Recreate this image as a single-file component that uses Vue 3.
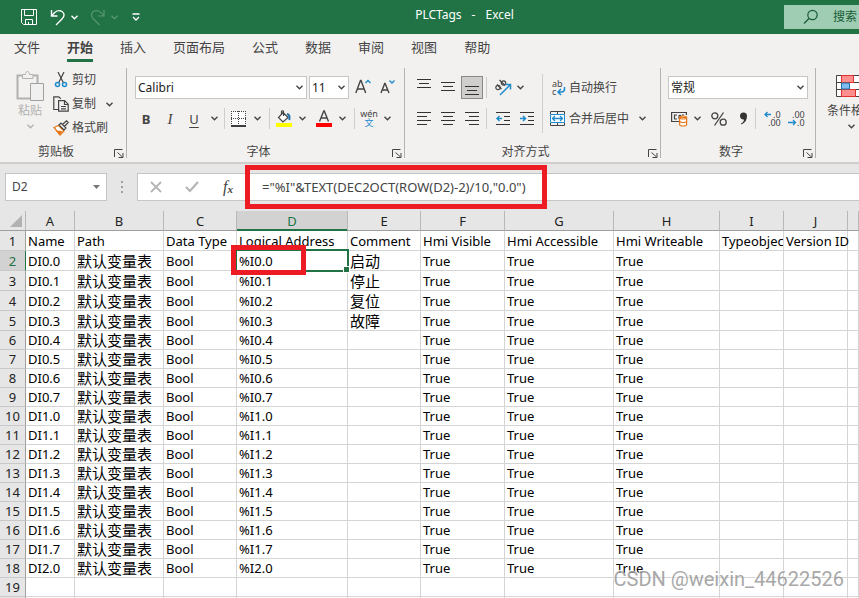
<script setup>
import { ref } from 'vue'

const tabs = ['文件', '开始', '插入', '页面布局', '公式', '数据', '审阅', '视图', '帮助']
const activeTab = ref('开始')

const columns = ['A', 'B', 'C', 'D', 'E', 'F', 'G', 'H', 'I', 'J', '']
const header = ['Name', 'Path', 'Data Type', 'Logical Address', 'Comment', 'Hmi Visible', 'Hmi Accessible', 'Hmi Writeable', 'Typeobject ID', 'Version ID', '']
const comments = ['启动', '停止', '复位', '故障']

const rows = [header]
for (let i = 0; i < 17; i++) {
  // 八进制地址
  const addr = `${Math.floor(i / 8)}.${i % 8}`
  rows.push([`DI${addr}`, '默认变量表', 'Bool', `%I${addr}`, comments[i] || '', 'True', 'True', 'True', '', '', ''])
}
rows.push(Array(11).fill(''), Array(11).fill(''))

const cellName = ref('D2')
const formula = ref('="%I"&TEXT(DEC2OCT(ROW(D2)-2)/10,"0.0")')

// 三种水平对齐图标，每条线的起点和长度
const aligns = [
  { name: '左对齐', lines: [[0, 14], [0, 10], [0, 14], [0, 10]] },
  { name: '居中', lines: [[0, 14], [2, 10], [0, 14], [2, 10]] },
  { name: '右对齐', lines: [[0, 14], [4, 10], [0, 14], [4, 10]] }
]
const valigns = [
  { name: '顶端对齐', top: 1 },
  { name: '垂直居中', top: 4 },
  { name: '底端对齐', top: 8, on: true }
]
</script>

<template>
<div class="excel">

  <header class="titlebar">
    <div class="quick">
      <button aria-label="保存">
        <svg width="17" height="17" fill="none" stroke="#fff"><path d="M.5.5h15v15h-13l-2-2zM3.500.5v6h9v-6M4.500 15.500v-5h7v5M7.500 15v-2"/></svg>
      </button>
      <button class="undo" aria-label="撤消">
        <svg width="16" height="17" fill="none" stroke="#fff" stroke-width="1.400"><path d="M1.500 1v6h6M2 6.500C5 2 9 .5 12 2.500c3 2 2.500 5 0 7.500l-6 6"/></svg>
      </button>
      <svg class="chev white" width="7" height="5"><path d="M.5.8l3 3 3-3"/></svg>
      <button class="redo" aria-label="恢复">
        <svg width="16" height="17" fill="none" stroke="#56966f" stroke-width="1.200"><path d="M14 1v6H8M13.500 6.500C10.500 2 6.500.5 3.500 2.500c-3 2-2.500 5 0 7.500l6 6"/></svg>
      </button>
      <svg class="chev dim" width="7" height="5"><path d="M.5.8l3 3 3-3"/></svg>
      <button class="more" aria-label="自定义快速访问工具栏">
        <svg width="8" height="8" fill="none" stroke="#fff" stroke-width="1.300"><path d="M.5 1h7M1 4l3 3 3-3"/></svg>
      </button>
    </div>
    <div class="title"><span>PLCTags</span><span>-</span><span>Excel</span></div>
    <label class="search">
      <svg width="16" height="16" fill="none" stroke="#185c37" stroke-width="1.200"><circle cx="9.500" cy="6" r="4.700"/><path d="M6 9.500l-5 5"/></svg>
      <input type="text" placeholder="搜索" aria-label="搜索">
    </label>
  </header>

  <nav class="tabs">
    <button v-for="tab in tabs" :key="tab" :class="{ active: tab === activeTab }" @click="activeTab = tab">{{ tab }}</button>
  </nav>

  <div class="ribbon">

    <section class="group clipboard">
      <div class="body">
        <button class="big paste">
          <svg width="29" height="32" fill="none" stroke="#b1b1b1">
            <path d="M6 4.500H1.500v23h13M17 4.500h4.500V12" fill="none" stroke-width="2"/>
            <path d="M6.500 7.500v-4h3c0-4 4-4 4 0h3.500v4z" fill="#f3f1f0"/>
            <path d="M14.500 12.500h13v17h-13z" fill="#f0f0f0" stroke="#a0a0a0"/>
          </svg>
          <span>粘贴</span>
          <svg class="chev dis" width="7" height="5"><path d="M.5.8l3 3 3-3"/></svg>
        </button>
        <div class="list">
          <button>
            <svg width="16" height="16" fill="none" stroke="#444" stroke-width="1.200"><path d="M5 0l5.500 11M11 0L5.500 11"/><g stroke="#1e8bcd" stroke-width="1.500"><circle cx="4.500" cy="12.500" r="2"/><circle cx="11.500" cy="12.500" r="2"/></g></svg>
            <span>剪切</span>
          </button>
          <button>
            <svg width="16" height="16" fill="none" stroke="#444" stroke-width="1.200"><path d="M5 13.500H.8V.8h5l2 2M5.600 4.600h6l3.600 3.600v7H5.600zM11.500 4.500v4h4M8 10.500h5M8 12.800h5"/></svg>
            <span>复制</span>
            <svg class="chev" width="7" height="5"><path d="M.5.8l3 3 3-3"/></svg>
          </button>
          <button>
            <svg width="16" height="16" fill="none"><path d="M1 7.500l4.500-2 5.500 5.500-4 4z" fill="#fff" stroke="#e8781a" stroke-width="1.300"/><path d="M3 10.500l6.500.5-2.500 4z" fill="#e8781a"/><path d="M6 5l2-2 5 5-2 2zM9.500 4.500L13.500.8 15.200 2.500 11.500 6.500" fill="#f3f1f0" stroke="#444" stroke-width="1.200"/></svg>
            <span>格式刷</span>
          </button>
        </div>
      </div>
      <footer><span>剪贴板</span><button aria-label="剪贴板设置"><svg class="launch" width="10" height="9"><path d="M.5 8V.5h8M3.500 3.500l5 4.500M9 4v4.500H4.500"/></svg></button></footer>
    </section>

    <section class="group font">
      <div class="body rows">
        <div class="row">
          <span class="combo name"><select aria-label="字体"><option>Calibri</option></select><svg class="chev" width="7" height="5"><path d="M.5.8l3 3 3-3"/></svg></span>
          <span class="combo size"><select aria-label="字号"><option>11</option></select><svg class="chev" width="7" height="5"><path d="M.5.8l3 3 3-3"/></svg></span>
          <button class="cell" aria-label="增大字号"><svg width="16" height="17" fill="none" stroke="#444" stroke-width="1.400"><path d="M.8 14L5.500 1.500h.5l4.700 12.500M2.500 10H9"/><path d="M10.500 4l2.500-2.500L15.500 4" stroke="#1e8bcd"/></svg></button>
          <button class="cell" aria-label="减小字号"><svg width="16" height="17" fill="none" stroke="#444" stroke-width="1.400"><path d="M2 14L5.700 4.500h.4L10 14M3.500 11h5"/><path d="M10.500 1.500L13 4l2.500-2.500" stroke="#1e8bcd"/></svg></button>
        </div>
        <div class="row tools">
          <button class="biu b">B</button>
          <button class="biu i">I</button>
          <button class="biu u">U</button>
          <button class="drop narrow" aria-label="下划线选项"><svg class="chev" width="7" height="5"><path d="M.5.8l3 3 3-3"/></svg></button>
          <i class="sep"></i>
          <button class="icon" aria-label="边框"><svg width="16" height="16" fill="none" stroke="#444"><path d="M.5.5h14v14H.5z" fill="#fff" stroke="none"/><path d="M0 .5h15M.5 0v14M14.500 0v14M7.500 0v14M0 7.500h15" stroke-dasharray="1 1"/><path d="M0 15h15" stroke="#000" stroke-width="1.500"/></svg></button>
          <button class="drop" aria-label="边框选项"><svg class="chev" width="7" height="5"><path d="M.5.8l3 3 3-3"/></svg></button>
          <i class="sep"></i>
          <button class="icon" aria-label="填充颜色"><svg width="16" height="17" fill="none" stroke="#444" stroke-width="1.200"><path d="M7 2.500l5 5-5 4.500-4.500-4.500zM5.500 5V1.500c0-1 2-1 2 0V6" fill="#fff"/><path d="M11 4c2.500.5 3 2.500 2.300 6" stroke="#1e6fa8" stroke-width="2"/><path d="M0 13h16v4H0z" fill="#ff0" stroke="none"/></svg></button>
          <button class="drop" aria-label="填充颜色选项"><svg class="chev" width="7" height="5"><path d="M.5.8l3 3 3-3"/></svg></button>
          <button class="icon color" aria-label="字体颜色"><svg width="16" height="17" fill="none" stroke="#444" stroke-width="1.400"><path d="M3.500 11.500L7.800 1h.5l4.200 10.500M5 8h6"/><path d="M0 13h16v4H0z" fill="red" stroke="none"/></svg></button>
          <button class="drop" aria-label="字体颜色选项"><svg class="chev" width="7" height="5"><path d="M.5.8l3 3 3-3"/></svg></button>
          <i class="sep"></i>
          <button class="icon wen"><span>wén</span><b>文</b></button>
          <button class="drop" aria-label="拼音选项"><svg class="chev" width="7" height="5"><path d="M.5.8l3 3 3-3"/></svg></button>
        </div>
      </div>
      <footer><span>字体</span><button aria-label="字体设置"><svg class="launch" width="10" height="9"><path d="M.5 8V.5h8M3.500 3.500l5 4.500M9 4v4.500H4.500"/></svg></button></footer>
    </section>

    <section class="group align">
      <div class="body">
        <div class="rows">
          <div class="row">
            <button v-for="v in valigns" :key="v.name" class="cell" :class="{ on: v.on }" :aria-label="v.name">
              <svg width="14" height="19"><rect v-for="n in 3" :key="n" :x="n === 2 ? 2 : 0" :y="v.top + (n - 1) * 4" :width="n === 2 ? 10 : 14" height="1" fill="#333"/></svg>
            </button>
            <i class="sep"></i>
            <button class="cell" aria-label="方向"><svg width="18" height="18" fill="none" stroke="#444" stroke-width="1.200"><circle cx="4" cy="8.500" r="2.200"/><path d="M3 5.500l4.500 4.500M5.500 1l5.500 5.500"/><circle cx="9.500" cy="4" r="2.200"/><path d="M6 16L16 6M11.500 5.500H16.500v5" stroke="#1e8bcd" stroke-width="1.500"/></svg></button>
            <button class="drop slim" aria-label="方向选项"><svg class="chev" width="7" height="5"><path d="M.5.8l3 3 3-3"/></svg></button>
          </div>
          <div class="row tools">
            <button v-for="a in aligns" :key="a.name" class="cell" :aria-label="a.name">
              <svg width="14" height="14"><rect v-for="(l, n) in a.lines" :key="n" :x="l[0]" :y="n * 4" :width="l[1]" height="1" fill="#333"/></svg>
            </button>
            <i class="sep"></i>
            <button class="cell" aria-label="减少缩进量"><svg width="14" height="14" fill="none" stroke="#333"><path d="M0 .5h14M8 4.500h6M8 8.500h6M0 12.500h14"/><path d="M6 6.500H1M3.500 4L1 6.500 3.500 9" stroke="#1e8bcd" stroke-width="1.500"/></svg></button>
            <button class="cell" aria-label="增加缩进量"><svg width="14" height="14" fill="none" stroke="#333"><path d="M0 .5h14M8 4.500h6M8 8.500h6M0 12.500h14"/><path d="M0 6.500h5M3 4l2.500 2.500L3 9" stroke="#1e8bcd" stroke-width="1.500"/></svg></button>
          </div>
        </div>
        <i class="sep tall"></i>
        <div class="rows text">
          <button class="row"><svg class="wrap" width="16" height="22"><text x="2" y="10">ab</text><text x="2" y="18">c</text><path d="M14.500 10v2c0 2-1 3-3 3H8.500M11 12l-3 3 3 3" fill="none" stroke="#1e8bcd" stroke-width="1.500"/></svg><span>自动换行</span></button>
          <button class="row tools"><svg width="16" height="16" fill="none" stroke="#444"><path d="M.5 3V.5h14V3M.5 12v2.500h14V12M7.500 0v3M7.500 12v3"/><path d="M.5 3.500h14v8H.5z" fill="#fff" stroke="#1e8bcd"/><path d="M3 7.500h9M5 5L2.500 7.500 5 10M10 5l2.500 2.500L10 10" stroke="#1e8bcd" stroke-width="1.300"/></svg><span>合并后居中</span><svg class="chev" width="7" height="5"><path d="M.5.8l3 3 3-3"/></svg></button>
        </div>
      </div>
      <footer><span>对齐方式</span><button aria-label="对齐设置"><svg class="launch" width="10" height="9"><path d="M.5 8V.5h8M3.500 3.500l5 4.500M9 4v4.500H4.500"/></svg></button></footer>
    </section>

    <section class="group number">
      <div class="body rows">
        <div class="row">
          <span class="combo format"><select aria-label="数字格式"><option>常规</option></select><svg class="chev" width="7" height="5"><path d="M.5.8l3 3 3-3"/></svg></span>
        </div>
        <div class="row tools">
          <button class="icon" aria-label="会计数字格式"><svg width="17" height="16" fill="none" stroke="#444" stroke-width="1.200"><path d="M8 10.500H.6v-9h14.800V4M6 4H3.500v4H6M8 8V5c0-1 2-1 2 0M13 4h-2"/><path d="M8.600 6.500h7v7c0 2-7 2-7 0z" fill="#fff" stroke="#e8781a"/><path d="M8.600 6.500c0 2 7 2 7 0s-7-2-7 0M8.600 10c0 2 7 2 7 0" stroke="#e8781a"/></svg></button>
          <button class="drop" aria-label="会计格式选项"><svg class="chev" width="7" height="5"><path d="M.5.8l3 3 3-3"/></svg></button>
          <button class="cell" aria-label="百分比"><svg width="16" height="14" fill="none" stroke="#444" stroke-width="1.300"><circle cx="3.800" cy="3.800" r="3"/><circle cx="12.200" cy="10.200" r="3"/><path d="M12.500.5l-9 13"/></svg></button>
          <button class="cell" aria-label="千位分隔"><svg width="9" height="14"><path d="M1 4a3.400 3.400 0 0 1 7 0c0 4-2 7-5.500 8.500L2 11.500C4 10.500 5 9 5 7.500 3 8 1 6.500 1 4z" fill="#333"/></svg></button>
          <i class="sep"></i>
          <button class="cell" aria-label="增加小数位数"><svg class="dec" width="18" height="22"><text x="9" y="10">.0</text><text x="4" y="18">.00</text><path d="M7 6.500H1M3.500 4L1 6.500 3.500 9"/></svg></button>
          <button class="cell" aria-label="减少小数位数"><svg class="dec" width="18" height="22"><text x="4" y="10">.00</text><text x="9" y="18">.0</text><path d="M0 14.500h7M5 12l2.500 2.500L5 17"/></svg></button>
        </div>
      </div>
      <footer><span>数字</span><button aria-label="数字设置"><svg class="launch" width="10" height="9"><path d="M.5 8V.5h8M3.500 3.500l5 4.500M9 4v4.500H4.500"/></svg></button></footer>
    </section>

    <section class="group styles">
      <div class="body">
        <button class="big">
          <svg width="30" height="32" fill="#fff" stroke="#444"><path d="M.5 4.500h29v21H.5zM.5 11.500h29M.5 18.500h29M23.500 4.500v21"/><path d="M5.500 4.500h12v7h-12zM5.500 18.500h14v7h-14z" fill="#ff8f8f" stroke="#e03030"/><path d="M5.500 12h8v6h-8z" fill="#7fbdf0" stroke="#1e6fa8"/></svg>
          <span>条件格式</span>
          <svg class="chev" width="7" height="5"><path d="M.5.8l3 3 3-3"/></svg>
        </button>
      </div>
    </section>
  </div>

  <div class="formulabar">
    <div class="namebox">
      <input v-model="cellName" type="text" aria-label="名称框">
      <svg width="7" height="4"><path d="M0 0h7L3.500 4z" fill="#777"/></svg>
    </div>
    <svg class="dots" width="2" height="12" fill="#a0a0a0"><path d="M0 0h2v2H0zM0 5h2v2H0zM0 10h2v2H0z"/></svg>
    <div class="fx">
      <button aria-label="取消"><svg width="12" height="12" fill="none" stroke="#b5b5b5" stroke-width="1.800"><path d="M1 1l10 10M11 1L1 11"/></svg></button>
      <button aria-label="输入"><svg width="14" height="12" fill="none" stroke="#b5b5b5" stroke-width="2.200"><path d="M1 6l4 4L13 1"/></svg></button>
      <button class="fn"><em>f</em><small>x</small></button>
    </div>
    <div class="formula">
      <input v-model="formula" type="text" aria-label="编辑栏">
      <div class="mark"></div>
    </div>
  </div>

  <main class="sheet">
    <table>
      <colgroup>
        <col class="c-row"><col class="c-a"><col class="c-b"><col class="c-c"><col class="c-d"><col class="c-e">
        <col class="c-f"><col class="c-g"><col class="c-h"><col class="c-i"><col class="c-i"><col>
      </colgroup>
      <thead>
        <tr>
          <th class="corner"><svg width="12" height="12"><path d="M12 0v12H0z" fill="#b2b2b2"/></svg></th>
          <th v-for="c in columns" :key="c" :class="{ sel: c === 'D' }">{{ c }}</th>
        </tr>
      </thead>
      <tbody>
        <tr v-for="(row, r) in rows" :key="r" :class="{ high: r < 5 }">
          <th :class="{ sel: r === 1 }">{{ r + 1 }}</th>
          <td v-for="(cell, c) in row" :key="c" :class="{ current: r === 1 && c === 3, cjk: r > 0 && (c === 1 || c === 4), spill: cell && !row[c + 1] }">
            {{ cell }}
            <template v-if="r === 1 && c === 3">
              <div class="cursor"></div>
              <div class="mark"></div>
            </template>
          </td>
        </tr>
      </tbody>
    </table>
  </main>

  <div class="watermark">CSDN @weixin_44622526</div>
</div>
</template>

<style>
body {
  margin: 0;
  overflow: hidden;
}
</style>

<style scoped>
.excel {
  position: relative;
  display: flex;
  flex-direction: column;
  height: 100vh;
  overflow: hidden;
  background: #fff;
  color: #444;
  font: 12px/16px "Noto Sans", "Noto Sans CJK SC", sans-serif;
}

button {
  display: flex;
  align-items: center;
  justify-content: center;
  flex: none;
  margin: 0;
  padding: 0;
  border: 0;
  background: none;
  color: inherit;
  font: inherit;
  white-space: nowrap;
}

input,
select {
  min-width: 0;
  box-sizing: border-box;
  border: 0;
  padding: 0;
  margin: 0;
  background: none;
  color: inherit;
  font: inherit;
  outline: 0;
}

svg {
  display: block;
  flex: none;
}

.chev {
  fill: none;
  stroke: #444;
  stroke-width: 1.4;
}

.chev.white {
  stroke: #fff;
}

.chev.dim {
  stroke: #56966f;
}

.chev.dis {
  stroke: #b1b1b1;
}

/* 标题栏 */
.titlebar {
  display: flex;
  flex: none;
  align-items: center;
  height: 34px;
  background: #217346;
  color: #fff;
}

.quick {
  display: flex;
  align-items: center;
  width: 124px;
  padding-left: 21px;
}

.undo,
.redo {
  margin: 0 5px 0 12px;
}

.more {
  margin-left: 14px;
}

.title {
  display: flex;
  flex: 1;
  justify-content: center;
  gap: 10px;
  padding-bottom: 4px;
}

.search {
  display: flex;
  align-items: center;
  gap: 14px;
  width: 56px;
  height: 24px;
  padding-left: 19px;
  background: #9fcdb3;
  color: #185c37;
}

.search input {
  width: 26px;
}

.search input::placeholder {
  color: #185c37;
  opacity: 1;
}

.tabs {
  display: flex;
  flex: none;
  gap: 27px;
  height: 30px;
  padding-left: 14px;
  background: #f3f1f0;
  font-size: 13px;
}

.tabs button {
  box-sizing: border-box;
  height: 28px;
  border-bottom: 3px solid transparent;
}

.tabs .active {
  border-color: #217346;
  font-weight: bold;
}

/* 功能区 */
.ribbon {
  display: flex;
  flex: none;
  height: 90px;
  padding: 4px 0;
  background: #f3f1f0;
}

.group {
  display: flex;
  flex: none;
  flex-direction: column;
  box-sizing: border-box;
  border-right: 1px solid #b5b3b2;
}

.clipboard {
  width: 127px;
}

.font {
  width: 278px;
}

.align {
  width: 256px;
}

.number {
  width: 155px;
}

.styles {
  border: 0;
}

.body {
  display: flex;
  height: 78px;
}

.group footer {
  display: flex;
  height: 12px;
  line-height: 12px;
}

.group footer span {
  flex: 1;
  text-align: center;
}

.group footer button {
  width: 14px;
  align-items: flex-end;
}

.launch {
  fill: none;
  stroke: #444;
}

.big {
  flex-direction: column;
  justify-content: flex-start;
  width: 46px;
  height: 64px;
  padding-top: 3px;
}

.big span {
  margin-bottom: 5px;
}

.big.paste {
  margin: 0 0 0 7px;
  color: #b1b1b1;
}

.styles .big {
  width: 70px;
}

.list button {
  height: 24px;
  gap: 3px;
}

.list .chev {
  margin-left: 7px;
}

.rows {
  display: flex;
  flex-direction: column;
  box-sizing: border-box;
  gap: 8px;
  padding: 8px 0 0 7px;
}

.row {
  display: flex;
  align-items: center;
  justify-content: flex-start;
  height: 23px;
}

.combo {
  display: flex;
  align-items: center;
  box-sizing: border-box;
  height: 23px;
  margin-right: 2px;
  padding: 0 3px 0 2px;
  border: 1px solid #c6c6c6;
  background: #fff;
  color: #222;
}

.combo select {
  flex: 1;
  height: 21px;
  appearance: none;
}

.name {
  width: 172px;
  margin-left: 1px;
}

.size {
  width: 40px;
}

.format {
  width: 140px;
}

.cell {
  box-sizing: border-box;
  width: 24px;
  height: 23px;
}

.cell.on {
  width: 22px;
  margin: 0 1px;
  border: 1px solid #8a8a8a;
  background: #d0cecd;
}

.biu {
  width: 24px;
  font-size: 13px;
}

.b {
  font-weight: bold;
}

.i {
  font-family: "Liberation Serif", serif;
  font-style: italic;
  font-size: 15px;
}

.u {
  text-decoration: underline;
  text-underline-offset: 3px;
}

.icon {
  width: 16px;
}

.color {
  margin-left: 4px;
}

.drop {
  width: 20px;
  height: 20px;
}

.narrow {
  width: 16px;
}

.slim {
  width: 10px;
}

.sep {
  flex: none;
  width: 1px;
  height: 21px;
  margin: 0 6px 0 2px;
  background: #d0cecd;
}

.sep.tall {
  height: 59px;
  margin: 6px 7px 0 2px;
}

.wen {
  flex-direction: column;
  font-size: 9px;
  line-height: 8px;
}

.wen b {
  color: #1e8bcd;
  font-weight: normal;
  line-height: 10px;
}

.align .row .sep {
  margin-right: 4px;
}

.align .rows:first-child {
  width: 135px;
}

.rows.text {
  padding-left: 0;
}

.text button {
  gap: 3px;
}

.text .chev {
  margin-left: 7px;
}

.wrap text,
.dec text {
  fill: #444;
  font-size: 9px;
}

.dec path {
  fill: none;
  stroke: #1e8bcd;
  stroke-width: 1.3;
}

.number .icon {
  margin-left: 3px;
}

.number .sep {
  margin: 0 5px 0 0;
}

/* 编辑栏 */
.formulabar {
  display: flex;
  flex: none;
  align-items: flex-start;
  height: 38px;
  padding: 9px 0 0 5px;
  border-top: 2px solid #d0cecd;
  background: #e6e6e6;
}

.namebox {
  display: flex;
  align-items: center;
  box-sizing: border-box;
  width: 102px;
  height: 28px;
  padding: 0 6px;
  border: 1px solid #c6c6c6;
  background: #fff;
}

.namebox input {
  flex: 1;
}

.dots {
  margin: 8px 14px 0;
}

.fx {
  display: flex;
  align-items: center;
  box-sizing: border-box;
  width: 109px;
  height: 28px;
  border: 1px solid #c6c6c6;
  border-right: 0;
  background: #fff;
}

.fx button {
  width: 36px;
}

.fn {
  font-family: "Liberation Serif", serif;
  font-size: 16px;
}

.fn small {
  font-size: 11px;
  font-style: italic;
  font-weight: bold;
  padding-top: 4px;
}

.formula {
  position: relative;
  flex: 1;
  box-sizing: border-box;
  height: 28px;
  padding-left: 15px;
  border: 1px solid #c6c6c6;
  border-right: 0;
  background: #fff;
}

.formula input {
  width: 100%;
  height: 26px;
  font-size: 13px;
}

.mark {
  position: absolute;
  z-index: 2;
  box-sizing: border-box;
  border: 5px solid #ed1c24;
  pointer-events: none;
}

.formula .mark {
  left: -2px;
  top: -9px;
  width: 302px;
  height: 44px;
}

/* 表格 */
.sheet {
  flex: 1;
  min-height: 0;
  overflow: hidden;
}

table {
  width: 100%;
  table-layout: fixed;
  border-collapse: separate;
  border-spacing: 0;
  color: #000;
  font-size: 13px;
  line-height: 18px;
}

.c-row {
  width: 26px;
}

.c-a {
  width: 49px;
}

.c-b {
  width: 89px;
}

.c-c,
.c-e {
  width: 73px;
}

.c-d {
  width: 111px;
}

.c-f {
  width: 84px;
}

.c-g {
  width: 109px;
}

.c-h {
  width: 106px;
}

.c-i {
  width: 64px;
}

th,
td {
  box-sizing: border-box;
  height: 19px;
  padding: 0;
  overflow: hidden;
  border-right: 1px solid #d4d4d4;
  border-bottom: 1px solid #d4d4d4;
  white-space: nowrap;
}

td {
  padding-left: 2px;
}

.high th,
.high td,
thead th {
  height: 20px;
}

/* 中文比西文大两号 */
.cjk {
  font-family: "Noto Sans CJK SC", sans-serif;
  font-size: 15px;
}

/* 右侧为空时文字可以溢出 */
.spill {
  overflow: visible;
}

th {
  background: #e6e6e6;
  color: #222;
  font-weight: normal;
  border-right-color: #9f9f9f;
  border-bottom-color: #c9c9c9;
}

thead th {
  border-right-color: #b8b8b8;
  border-bottom-color: #9f9f9f;
}

.corner svg {
  margin-left: 10px;
}

.sel {
  background: #d2d2d2;
  color: #217346;
}

thead .sel {
  border-bottom-color: #217346;
  box-shadow: inset 0 -1px #217346;
}

tbody .sel {
  border-right-color: #217346;
}

.current {
  position: relative;
  overflow: visible;
}

.cursor {
  position: absolute;
  inset: -2px;
  border: 2px solid #217346;
}

.cursor::after {
  content: "";
  position: absolute;
  right: -3px;
  bottom: -3px;
  width: 5px;
  height: 5px;
  border: 1px solid #fff;
  background: #217346;
}

.current .mark {
  left: -6px;
  top: -6px;
  width: 75px;
  height: 30px;
}

.watermark {
  position: absolute;
  right: 15px;
  bottom: 6px;
  color: #999;
  font-family: Roboto, sans-serif;
  font-size: 20px;
  line-height: 26px;
  opacity: 0.85;
  text-shadow: -1px -1px #fff;
}
</style>
